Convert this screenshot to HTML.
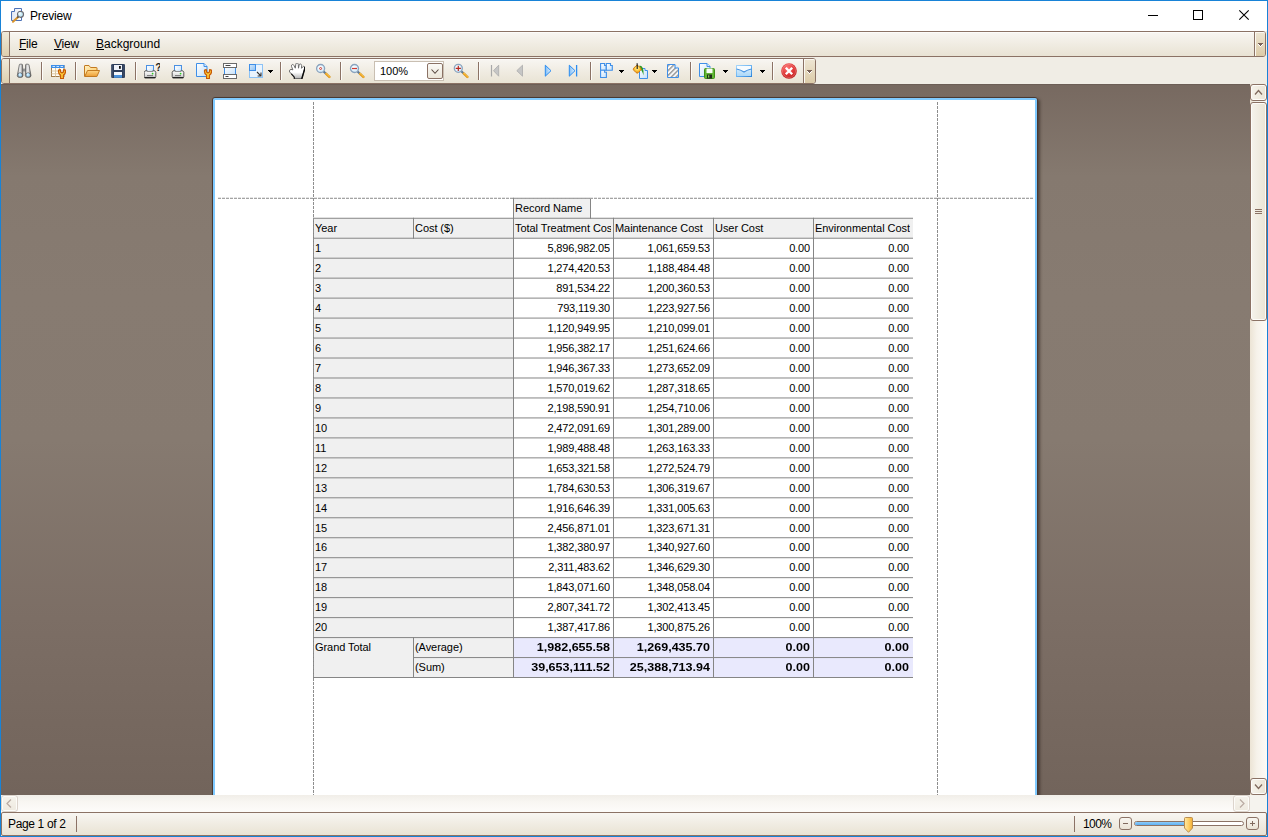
<!DOCTYPE html>
<html lang="en">
<head>
<meta charset="utf-8">
<title>Preview</title>
<style>
*{box-sizing:border-box;margin:0;padding:0}
html,body{width:1268px;height:837px;overflow:hidden}
body{position:relative;background:#f0ede5;font-family:"Liberation Sans",sans-serif;font-size:12px;color:#000}
.abs{position:absolute}
#winborder{position:absolute;left:0;top:0;width:1268px;height:837px;border:1px solid #1883d7;pointer-events:none;z-index:50}
#title{position:absolute;left:1px;top:1px;width:1266px;height:30px;background:#fff}
#title .txt{position:absolute;left:29px;top:7px;font-size:12px;line-height:16px;letter-spacing:-0.15px}
.bar{position:absolute;border:1px solid #8b7265;border-radius:3px;box-shadow:inset 0 1px 0 #fdfcfa;background:linear-gradient(#f8f6f2 0%,#f1ede4 45%,#e9e3d4 100%)}
.grip{position:absolute;left:0;top:0;width:8px;bottom:0;border-right:1px solid #8b7265;background:linear-gradient(#efe9da,#dfcfae);border-radius:2px 0 0 2px}
.menu{position:absolute;top:0;height:24px;line-height:24px;font-size:12px;letter-spacing:-0.25px}
.menu u{text-decoration:underline;text-underline-offset:1px}
.sep{position:absolute;top:3px;width:2px;height:18px;background:linear-gradient(90deg,#8b7265 50%,#fdfcfa 50%)}
.ic{position:absolute;top:4px;width:16px;height:16px}
.dd{position:absolute;top:11px;width:5px;height:1px;color:#000;background:currentColor}.dd::before{content:'';position:absolute;left:1px;top:1px;width:3px;height:1px;background:currentColor}.dd::after{content:'';position:absolute;left:2px;top:2px;width:1px;height:1px;background:currentColor}
#view{position:absolute;left:1px;top:84px;width:1249px;height:711px;background:linear-gradient(#776960 0%,#85796f 13%,#877b71 30%,#867a70 50%,#7c6e65 75%,#72645b 100%);overflow:hidden}
#pageshadow{position:absolute;left:211px;top:13px;width:826px;height:720px;border:1px solid #4a3932;border-radius:3px;box-shadow:2px 2px 3px rgba(40,30,25,.55)}
#page{position:absolute;left:212px;top:14px;width:824px;height:720px;border:2px solid #80caff;border-radius:2px;background:#fff}
.c{position:absolute;border:1px solid transparent;font-size:11px;line-height:13px;white-space:nowrap;overflow:hidden;padding:3px 2px 0 1px;background:#fff;color:#000}
.c span{display:block;overflow:hidden}
.c.h{background:#f0f0f0}
.c.n{text-align:right;padding-right:3px;letter-spacing:-.14px}
.c.h{letter-spacing:-.06px}
.c.t{background:#e9e9fd;font-weight:bold}
.c.t{letter-spacing:0}
.c.t span{overflow:visible;transform:scaleX(1.14);transform-origin:100% 50%}
.sbtn{position:absolute;border:1px solid #8b7265;border-radius:3px;background:linear-gradient(90deg,#f6f3ec,#eae4d5);box-shadow:inset 0 0 0 1px #fdfcf9}
#hscroll .sbtn{background:linear-gradient(#f6f3ec,#eeeae0)}
.sbtn.dis{border-color:#dcd4cc}
.zbtn{position:absolute;width:13px;height:13px;border:1px solid #8b7265;border-radius:3px;background:linear-gradient(#f8f6f1,#e9e3d5)}
.cust{position:absolute;right:0;top:0;bottom:0;border-left:1px solid #8b7265;background:linear-gradient(#eee6d4,#dccba8);border-radius:0 2px 2px 0;box-shadow:inset 1px 1px 0 #fbf8f1}
.cust .dd{filter:drop-shadow(0 1px 0 #fff)}
</style>
</head>
<body>
<svg width="0" height="0" style="position:absolute"><defs>
<linearGradient id="gBar" x1="0" x2="1" y1="0" y2="0"><stop offset="0" stop-color="#8a8a8a"/><stop offset=".3" stop-color="#dedede"/><stop offset=".5" stop-color="#f0f0f0"/><stop offset=".8" stop-color="#a6a6a6"/><stop offset="1" stop-color="#5a5a5a"/></linearGradient>
<linearGradient id="gFoB" x1="0" x2="1" y1="0" y2="1"><stop offset="0" stop-color="#fff0c0"/><stop offset="1" stop-color="#ffc860"/></linearGradient>
<linearGradient id="gFoF" x1="0" x2="0" y1="0" y2="1"><stop offset="0" stop-color="#ffd684"/><stop offset="1" stop-color="#ec9c34"/></linearGradient>
<linearGradient id="gPap" x1="0" x2="1" y1="0" y2="1"><stop offset="0" stop-color="#ffffff"/><stop offset="1" stop-color="#c4e0fa"/></linearGradient>
<linearGradient id="gPrn" x1="0" x2="0" y1="0" y2="1"><stop offset="0" stop-color="#ffffff"/><stop offset=".6" stop-color="#e2e2e2"/><stop offset="1" stop-color="#bdbdbd"/></linearGradient>
<linearGradient id="gBlu" x1="0" x2="1" y1="0" y2="1"><stop offset="0" stop-color="#d6eafc"/><stop offset="1" stop-color="#8cc0f2"/></linearGradient>
<radialGradient id="gLens" cx=".4" cy=".35" r=".7"><stop offset="0" stop-color="#ffffff"/><stop offset="1" stop-color="#cbe8fb"/></radialGradient>
<linearGradient id="gNav" x1="0" x2="1" y1="0" y2="0"><stop offset="0" stop-color="#7dbcf7"/><stop offset="1" stop-color="#e8f4fe"/></linearGradient>
<linearGradient id="gHand" x1="0" x2="0" y1="0" y2="1"><stop offset="0" stop-color="#ffffff"/><stop offset=".6" stop-color="#ffffff"/><stop offset="1" stop-color="#b4b4b4"/></linearGradient>
<radialGradient id="gBuck" cx=".4" cy=".4" r=".65"><stop offset="0" stop-color="#fff3a8"/><stop offset=".5" stop-color="#ffd24a"/><stop offset="1" stop-color="#ee9a1c"/></radialGradient>
<pattern id="hatch" width="3.400" height="3.400" patternUnits="userSpaceOnUse" patternTransform="rotate(-45)"><rect width="3.400" height="3.400" fill="#fbfbfb"/><rect width="3.400" height="1.500" fill="#9c9c9c"/></pattern>
<linearGradient id="gMail" x1="0" x2="0" y1="0" y2="1"><stop offset="0" stop-color="#e4f3fe"/><stop offset="1" stop-color="#a8d6f8"/></linearGradient>
<radialGradient id="gRed" cx=".4" cy=".3" r=".8"><stop offset="0" stop-color="#f77"/><stop offset=".5" stop-color="#e13a3a"/><stop offset="1" stop-color="#b81818"/></radialGradient>
<linearGradient id="gThumb" x1="0" x2="1" y1="0" y2="0"><stop offset="0" stop-color="#ffe9a6"/><stop offset=".5" stop-color="#fdd06a"/><stop offset="1" stop-color="#f3ad33"/></linearGradient>
<linearGradient id="gTi" x1="0" x2="1" y1="0" y2="0"><stop offset="0" stop-color="#dfe5f2"/><stop offset="1" stop-color="#ffffff"/></linearGradient>
<linearGradient id="gMailS" x1="0" x2="1" y1="0" y2="1"><stop offset="0" stop-color="#a8d6fa"/><stop offset=".5" stop-color="#6cb4f2"/><stop offset="1" stop-color="#2f86dc"/></linearGradient>
</defs></svg>
<div id="title">
<svg class="abs" style="left:8px;top:6px" width="18" height="18" viewBox="0 0 18 18"><path d="M5.500 1.500H12.500V13.500H2.500V4.500H5.500Z" fill="url(#gTi)" stroke="#4d72b8" stroke-width="1"/><path d="M8.800 10.200L4 14.700" stroke="#d9962f" stroke-width="2.100" stroke-linecap="round"/><path d="M9.300 9.700L8.300 10.700" stroke="#5b4a34" stroke-width="1.800"/><circle cx="11.500" cy="7.300" r="3" fill="#c9edf9" stroke="#6b6b73" stroke-width="1.200"/><circle cx="10.800" cy="6.600" r="1.300" fill="#effaff"/></svg>
<div class="txt">Preview</div>
<svg class="abs" style="left:1140px;top:0" width="126" height="30" viewBox="0 0 126 30"><path d="M7 14.500h10" stroke="#000" stroke-width="1" fill="none"/><rect x="52.500" y="9.500" width="9" height="9" stroke="#000" stroke-width="1" fill="none"/><path d="M98.300 9.300l9.400 9.400M107.700 9.300l-9.400 9.400" stroke="#000" stroke-width="1.100" fill="none"/></svg>
</div>
<div class="bar" id="menubar" style="left:1px;top:31px;width:1265px;height:26px">
<div class="grip"></div>
<div class="menu" style="left:17px"><u>F</u>ile</div>
<div class="menu" style="left:52px"><u>V</u>iew</div>
<div class="menu" style="left:94px;letter-spacing:0"><u>B</u>ackground</div>
<div class="cust" style="width:11px"><div class="dd" style="left:3px;top:11px;color:#7a6256"></div></div>
</div>
<div class="bar" id="toolbar" style="left:1px;top:58px;width:815px;height:26px">
<div class="grip"></div>
<div class="sep" style="left:39px"></div><div class="sep" style="left:73px"></div><div class="sep" style="left:133px"></div><div class="sep" style="left:278px"></div><div class="sep" style="left:338px"></div><div class="sep" style="left:476px"></div><div class="sep" style="left:588px"></div><div class="sep" style="left:688px"></div><div class="sep" style="left:770px"></div>
<svg class="ic" style="left:14px" viewBox="0 0 16 16"><rect x="6.500" y="5.600" width="3.200" height="2.900" fill="#9a9a9a"/><path d="M3.300 1.900q0-.7.800-.7h1.600q.8 0 .8.700l.5 10.700q0 2-2.900 2t-2.800-2z" fill="url(#gBar)" stroke="#555" stroke-width=".7"/><path d="M9.600 1.900q0-.7.800-.7h1.600q.8 0 1 .7l2 10.700q0 2-2.800 2t-2.900-2z" fill="url(#gBar)" stroke="#555" stroke-width=".7"/><circle cx="4.100" cy="11.900" r="2.300" fill="#4a4a4a"/><circle cx="12.100" cy="11.900" r="2.300" fill="#4a4a4a"/><circle cx="4.100" cy="11.900" r="1.900" fill="#aadcfb"/><circle cx="12.100" cy="11.900" r="1.900" fill="#aadcfb"/><circle cx="3.700" cy="11.500" r=".9" fill="#dcf1ff"/><circle cx="11.700" cy="11.500" r=".9" fill="#dcf1ff"/></svg>
<svg class="ic" style="left:48px" viewBox="0 0 16 16"><rect x="1.500" y="2.500" width="12.500" height="11" fill="#fffdf8" stroke="#a07c4c"/><path d="M1.500 8h12M1.500 10.800h12M5.500 5v8.500M9.500 5v8.500" stroke="#dcc7a0" stroke-width="1" fill="none"/><rect x="1" y="2" width="13.500" height="3" fill="#3f8fe8"/><path d="M2.500 3.500h2.500M6.500 3.500h2.500M10.500 3.500h2.500" stroke="#cfe6ff" stroke-width="1"/><path d="M8.600 7.200l1.700-.6.400 2.500q1.300 1.300 2.600 0l.4-2.500 1.700.6q.5 3.800-2 4.900v3.400h-2.800v-3.400q-2.500-1.100-2-4.900z" fill="#ffd23c" stroke="#c85a05" stroke-width="1.250" stroke-linejoin="round"/></svg>
<svg class="ic" style="left:82px" viewBox="0 0 16 16"><path d="M.5 13.500v-10.500q0-.5.500-.5h4l1.500 2h6q.5 0 .5.500v3" fill="url(#gFoB)" stroke="#c27a22" stroke-linejoin="round"/><path d="M.8 13.500l2.700-6h12l-2.600 6z" fill="url(#gFoF)" stroke="#c27a22" stroke-linejoin="round"/></svg>
<svg class="ic" style="left:108px" viewBox="0 0 16 16"><rect x="1.200" y="1" width="13.800" height="14" rx="1.300" fill="#2d3d59"/><path d="M2.300 1.500v13M13.900 1.500v13" stroke="#596983" stroke-width=".5"/><rect x="4" y="2" width="8" height="5" fill="#eef2fa"/><rect x="9" y="3" width="1.800" height="2.800" fill="#111"/><rect x="4" y="9" width="8" height="3.200" fill="#f4f7fc"/><rect x="4" y="12" width="8" height="2.800" fill="#4c93dc"/></svg>
<svg class="ic" style="left:142px" viewBox="0 0 16 16"><g transform="translate(0 0)"><rect x="2.500" y="2.500" width="7" height="6.500" fill="url(#gPap)" stroke="#4a90e2"/><path d="M1.200 7.800h9.600l1 1.500v4.200q0 1.300-1.300 1.300h-9q-1.300 0-1.300-1.300v-4.200z" fill="url(#gPrn)" stroke="#555" stroke-width="1"/><path d="M3 8.400h6" stroke="#8a8a8a" stroke-width="1"/><rect x="3.500" y="5" width="5" height="3" fill="url(#gPap)"/><path d="M3 12.600h6" stroke="#777" stroke-width="1"/><path d="M1 14.700h10" stroke="#222" stroke-width="1.200" stroke-linecap="round"/><circle cx="8.600" cy="10.600" r=".9" fill="#2fd020"/></g><text x="11.300" y="7.500" font-family="Liberation Sans,sans-serif" font-weight="bold" font-size="10.500" fill="#1a1a1a">?</text></svg>
<svg class="ic" style="left:168px" viewBox="0 0 16 16"><g transform="translate(2 0)"><rect x="2.500" y="2.500" width="7" height="6.500" fill="url(#gPap)" stroke="#4a90e2"/><path d="M1.200 7.800h9.600l1 1.500v4.200q0 1.300-1.300 1.300h-9q-1.300 0-1.300-1.300v-4.200z" fill="url(#gPrn)" stroke="#555" stroke-width="1"/><path d="M3 8.400h6" stroke="#8a8a8a" stroke-width="1"/><rect x="3.500" y="5" width="5" height="3" fill="url(#gPap)"/><path d="M3 12.600h6" stroke="#777" stroke-width="1"/><path d="M1 14.700h10" stroke="#222" stroke-width="1.200" stroke-linecap="round"/><circle cx="8.600" cy="10.600" r=".9" fill="#2fd020"/></g></svg>
<svg class="ic" style="left:194px" viewBox="0 0 16 16"><path d="M.5.500h7.500l3 3v10h-10.500z" fill="url(#gPap)" stroke="#3f8fe8" stroke-linejoin="round"/><path d="M8 .5v3h3" fill="#dcecfc" stroke="#3f8fe8" stroke-linejoin="round"/><path d="M8.600 7.200l1.700-.6.400 2.500q1.300 1.300 2.600 0l.4-2.500 1.700.6q.5 3.800-2 4.900v3.400h-2.800v-3.400q-2.500-1.100-2-4.900z" fill="#ffd23c" stroke="#c85a05" stroke-width="1.250" stroke-linejoin="round"/></svg>
<svg class="ic" style="left:220px" viewBox="0 0 16 16"><rect x="2.500" y="4" width="11" height="8" fill="url(#gPap)" stroke="#3f8fe8"/><rect x="1.500" y=".5" width="13" height="4" fill="#fff" stroke="#6a6a6a"/><rect x="1.500" y="11.500" width="13" height="4" fill="#fff" stroke="#6a6a6a"/><path d="M3.500 2.500h5M3.500 13.500h3" stroke="#444" stroke-width="1"/></svg>
<svg class="ic" style="left:246px" viewBox="0 0 16 16"><rect x="1.500" y="1.500" width="13" height="13" fill="#eaf4fe" stroke="#8cc2f5"/><rect x="1.500" y="1.500" width="6" height="6" fill="url(#gBlu)" stroke="#3f8fe8"/><path d="M9 9l3.800 3.800M13 9.600v3.400h-3.400" stroke="#333" stroke-width="1.100" fill="none"/></svg>
<svg class="ic" style="left:287px" viewBox="0 0 16 16"><path d="M5.300 15.500v-1.300l-2.700-3-1.900-2.200q-.8-1.200.2-2.100 1.100-.8 2.300-.3l.7.400-1.400-3.600q-.3-1.600.8-1.900 1.200-.2 1.700 1.100l1.300 2.600.5-4q.2-1.300 1.300-1.300 1.100.1 1.200 1.400l.2 3.900.6-3.200q.3-1.100 1.300-1 1.200.2 1.200 1.500l-.1 2.800 1.300-1.500q.8-.8 1.600-.3.800.7.400 1.900l-1.200 4.100-1.700 6z" fill="url(#gHand)" stroke="#6e6e6e" stroke-width="1" stroke-linejoin="round"/><path d="M15.700 4.600q.3.500.1.900l-1.200 4.100-1.700 5.900" fill="none" stroke="#0a0a0a" stroke-width="1.500" stroke-linecap="round"/><path d="M5.300 15.500v-1.300l-2.700-3" fill="none" stroke="#1a1a1a" stroke-width="1.200" stroke-linecap="round"/></svg>
<svg class="ic" style="left:313px" viewBox="0 0 16 16"><path d="M8.6 8.5L14.200 13.700" stroke="#5f7a96" stroke-width="2.200" stroke-linecap="round"/><path d="M11.2 10.8L14.400 13.900" stroke="#f0a826" stroke-width="2.400" stroke-linecap="round"/><path d="M11.7 10.6L14.900 13.300" stroke="#ffe38a" stroke-width=".7" stroke-dasharray="1 .8"/><circle cx="5.6" cy="5.5" r="4" fill="url(#gLens)" stroke="#8ba3bd" stroke-width="1.300"/><circle cx="5.6" cy="5.5" r="1" fill="#fff" stroke="#d03a30" stroke-width="1"/></svg>
<svg class="ic" style="left:347px" viewBox="0 0 16 16"><path d="M8.5 8.5L14.200 13.700" stroke="#5f7a96" stroke-width="2.200" stroke-linecap="round"/><path d="M11.1 10.8L14.400 13.900" stroke="#f0a826" stroke-width="2.400" stroke-linecap="round"/><path d="M11.6 10.6L14.900 13.300" stroke="#ffe38a" stroke-width=".7" stroke-dasharray="1 .8"/><circle cx="5.5" cy="5.5" r="4" fill="url(#gLens)" stroke="#8ba3bd" stroke-width="1.300"/><path d="M3.0 5.5h5" stroke="#d03a30" stroke-width="1.200"/></svg>
<svg class="ic" style="left:451px" viewBox="0 0 16 16"><path d="M8.3 8.3L14.200 13.700" stroke="#5f7a96" stroke-width="2.200" stroke-linecap="round"/><path d="M10.9 10.6L14.400 13.900" stroke="#f0a826" stroke-width="2.400" stroke-linecap="round"/><path d="M11.4 10.4L14.900 13.300" stroke="#ffe38a" stroke-width=".7" stroke-dasharray="1 .8"/><circle cx="5.3" cy="5.3" r="4" fill="url(#gLens)" stroke="#8ba3bd" stroke-width="1.300"/><path d="M2.6999999999999997 5.3h5.200M5.3 2.6999999999999997v5.200" stroke="#b82820" stroke-width="1.200"/></svg>
<svg class="ic" style="left:485px" viewBox="0 0 16 16"><path d="M4.500 2v11.500" stroke="#a8a8a8" stroke-width="1.200"/><path d="M6.500 7.700l5.200-5.500v11z" fill="#c6c6c6" stroke="#ababab" stroke-width=".8"/></svg>
<svg class="ic" style="left:511px" viewBox="0 0 16 16"><path d="M3.800 7.700l5.700-5.500v11z" fill="#c6c6c6" stroke="#ababab" stroke-width=".8"/></svg>
<svg class="ic" style="left:537px" viewBox="0 0 16 16"><path d="M12 7.700l-5.700-5.500v11z" fill="url(#gNav)" stroke="#2b8cf0" stroke-width="1"/></svg>
<svg class="ic" style="left:563px" viewBox="0 0 16 16"><path d="M10 7.700l-5.700-5.500v11z" fill="url(#gNav)" stroke="#2b8cf0" stroke-width="1"/><path d="M11.600 2v11.500" stroke="#2b8cf0" stroke-width="1.300"/></svg>
<svg class="ic" style="left:597px" viewBox="0 0 16 16"><path d="M1.600 .5h4v2h1.700v4.800h-5.700z" fill="url(#gPap)" stroke="#3f8fe8" stroke-width="1.100"/><path d="M7.300 .5h4.200v2h1.800v4.800h-6z" fill="url(#gPap)" stroke="#3f8fe8" stroke-width="1.100"/><path d="M1.600 7.300h4v2h1.800v5.200h-5.800z" fill="url(#gPap)" stroke="#3f8fe8" stroke-width="1.100"/></svg>
<svg class="ic" style="left:630px" viewBox="0 0 16 16"><path d="M7.500 5.500h5.500v2h2.500v8h-8z" fill="url(#gPap)" stroke="#3f8fe8"/><path d="M7.600 2.600q4.700.6 3.900 10q-1.300-5.600-4.400-7.600z" fill="#2a9a28"/><rect x="-3.200" y="-3.200" width="6.400" height="6.400" rx="1.600" transform="translate(5.200 6.200) rotate(45)" fill="url(#gBuck)" stroke="#d27c0c" stroke-width=".9"/><path d="M5.200.4v5.500" stroke="#111" stroke-width="1.100"/><circle cx="5.200" cy=".7" r=".7" fill="#777"/></svg>
<svg class="ic" style="left:663px" viewBox="0 0 16 16"><path d="M10.200 1.700l3.100 3.100h-3.100z" fill="#f4f9ff" stroke="#a4cdf5" stroke-width=".6"/><path d="M2.500 1.500h7.500v3.500h3.500v9.500h-11z" fill="url(#hatch)" stroke="#3f8fe8"/></svg>
<svg class="ic" style="left:697px" viewBox="0 0 16 16"><path d="M.5.500h7.500l3 3v10h-10.500z" fill="url(#gPap)" stroke="#3f8fe8" stroke-linejoin="round"/><path d="M8 .5v3h3" fill="#dcecfc" stroke="#3f8fe8" stroke-linejoin="round"/><rect x="5.500" y="5.500" width="10" height="10" rx="1" fill="#62b635" stroke="#3f9018"/><rect x="7.500" y="5.500" width="6" height="4.500" fill="#fafdf7"/><rect x="8" y="11.500" width="5" height="4" fill="#1f2a1a"/><rect x="9" y="12.300" width="1.300" height="2.300" fill="#7fd050"/></svg>
<svg class="ic" style="left:734px" viewBox="0 0 16 16"><rect x=".5" y="2.500" width="15" height="11" fill="url(#gMail)" stroke="url(#gMailS)"/><path d="M1 3h14v3q-3.500.8-7 3-3.500-2.200-7-3z" fill="#f6fbff"/><path d="M.6 6q3.900.8 7.400 3 3.500-2.200 7.400-3" fill="none" stroke="#3f8fe0" stroke-width="1.100"/></svg>
<svg class="ic" style="left:779px" viewBox="0 0 16 16"><circle cx="8" cy="8" r="7.800" fill="url(#gRed)"/><circle cx="8" cy="8" r="6.500" fill="none" stroke="#fff" stroke-opacity=".22" stroke-width="1"/><path d="M4.800 4.800l6.400 6.400M11.200 4.800l-6.400 6.400" stroke="#fff" stroke-width="2.300" stroke-linecap="butt"/></svg>
<div class="dd" style="left:266.0px"></div><div class="dd" style="left:617.0px"></div><div class="dd" style="left:650.0px"></div><div class="dd" style="left:721.0px"></div><div class="dd" style="left:758.0px"></div>
<div class="abs" id="combo" style="left:372px;top:2px;width:70px;height:20px;border:1px solid #c9bfb2;background:#fff"><div class="abs" style="left:5px;top:2px;font-size:11px;line-height:14px">100%</div><div class="abs" style="left:52px;top:1px;width:16px;height:16px;border:1px solid #8b7265;border-radius:2px;background:linear-gradient(#fbfaf7,#ebe5d8)"><svg width="14" height="14" viewBox="0 0 14 14" style="display:block"><path d="M3.500 5.500l3.500 3.800l3.500-3.800" fill="none" stroke="#5a4a42" stroke-width="1.100"/></svg></div></div>
<div class="cust" style="width:12px"><div class="dd" style="left:3px;top:11px;color:#7a6256"></div></div>
</div>
<div id="view">
<div class="abs" style="left:0;top:0;width:100%;height:1px;background:#6c5e56"></div>
<div id="pageshadow"></div>
<div id="page"></div>
</div>
<div class="abs" id="content" style="left:0;top:0;width:1250px;height:795px;overflow:hidden">
<div class="c h" style="left:513px;top:198px;width:78px;height:21px"><span>Record Name</span></div>
<div class="c h" style="left:313px;top:218px;width:101px;height:21px"><span>Year</span></div>
<div class="c h" style="left:413px;top:218px;width:101px;height:21px"><span>Cost ($)</span></div>
<div class="c h" style="left:513px;top:218px;width:101px;height:21px"><span>Total Treatment Cost</span></div>
<div class="c h" style="left:613px;top:218px;width:101px;height:21px"><span>Maintenance Cost</span></div>
<div class="c h" style="left:713px;top:218px;width:101px;height:21px"><span>User Cost</span></div>
<div class="c h" style="left:813px;top:218px;width:100px;height:21px"><span>Environmental Cost</span></div>
<div class="c h" style="left:313px;top:238px;width:201px;height:21px"><span>1</span></div>
<div class="c n" style="left:513px;top:238px;width:101px;height:21px"><span>5,896,982.05</span></div>
<div class="c n" style="left:613px;top:238px;width:101px;height:21px"><span>1,061,659.53</span></div>
<div class="c n" style="left:713px;top:238px;width:101px;height:21px"><span>0.00</span></div>
<div class="c n" style="left:813px;top:238px;width:100px;height:21px"><span>0.00</span></div>
<div class="c h" style="left:313px;top:258px;width:201px;height:21px"><span>2</span></div>
<div class="c n" style="left:513px;top:258px;width:101px;height:21px"><span>1,274,420.53</span></div>
<div class="c n" style="left:613px;top:258px;width:101px;height:21px"><span>1,188,484.48</span></div>
<div class="c n" style="left:713px;top:258px;width:101px;height:21px"><span>0.00</span></div>
<div class="c n" style="left:813px;top:258px;width:100px;height:21px"><span>0.00</span></div>
<div class="c h" style="left:313px;top:278px;width:201px;height:21px"><span>3</span></div>
<div class="c n" style="left:513px;top:278px;width:101px;height:21px"><span>891,534.22</span></div>
<div class="c n" style="left:613px;top:278px;width:101px;height:21px"><span>1,200,360.53</span></div>
<div class="c n" style="left:713px;top:278px;width:101px;height:21px"><span>0.00</span></div>
<div class="c n" style="left:813px;top:278px;width:100px;height:21px"><span>0.00</span></div>
<div class="c h" style="left:313px;top:298px;width:201px;height:21px"><span>4</span></div>
<div class="c n" style="left:513px;top:298px;width:101px;height:21px"><span>793,119.30</span></div>
<div class="c n" style="left:613px;top:298px;width:101px;height:21px"><span>1,223,927.56</span></div>
<div class="c n" style="left:713px;top:298px;width:101px;height:21px"><span>0.00</span></div>
<div class="c n" style="left:813px;top:298px;width:100px;height:21px"><span>0.00</span></div>
<div class="c h" style="left:313px;top:318px;width:201px;height:21px"><span>5</span></div>
<div class="c n" style="left:513px;top:318px;width:101px;height:21px"><span>1,120,949.95</span></div>
<div class="c n" style="left:613px;top:318px;width:101px;height:21px"><span>1,210,099.01</span></div>
<div class="c n" style="left:713px;top:318px;width:101px;height:21px"><span>0.00</span></div>
<div class="c n" style="left:813px;top:318px;width:100px;height:21px"><span>0.00</span></div>
<div class="c h" style="left:313px;top:338px;width:201px;height:21px"><span>6</span></div>
<div class="c n" style="left:513px;top:338px;width:101px;height:21px"><span>1,956,382.17</span></div>
<div class="c n" style="left:613px;top:338px;width:101px;height:21px"><span>1,251,624.66</span></div>
<div class="c n" style="left:713px;top:338px;width:101px;height:21px"><span>0.00</span></div>
<div class="c n" style="left:813px;top:338px;width:100px;height:21px"><span>0.00</span></div>
<div class="c h" style="left:313px;top:358px;width:201px;height:21px"><span>7</span></div>
<div class="c n" style="left:513px;top:358px;width:101px;height:21px"><span>1,946,367.33</span></div>
<div class="c n" style="left:613px;top:358px;width:101px;height:21px"><span>1,273,652.09</span></div>
<div class="c n" style="left:713px;top:358px;width:101px;height:21px"><span>0.00</span></div>
<div class="c n" style="left:813px;top:358px;width:100px;height:21px"><span>0.00</span></div>
<div class="c h" style="left:313px;top:378px;width:201px;height:21px"><span>8</span></div>
<div class="c n" style="left:513px;top:378px;width:101px;height:21px"><span>1,570,019.62</span></div>
<div class="c n" style="left:613px;top:378px;width:101px;height:21px"><span>1,287,318.65</span></div>
<div class="c n" style="left:713px;top:378px;width:101px;height:21px"><span>0.00</span></div>
<div class="c n" style="left:813px;top:378px;width:100px;height:21px"><span>0.00</span></div>
<div class="c h" style="left:313px;top:398px;width:201px;height:21px"><span>9</span></div>
<div class="c n" style="left:513px;top:398px;width:101px;height:21px"><span>2,198,590.91</span></div>
<div class="c n" style="left:613px;top:398px;width:101px;height:21px"><span>1,254,710.06</span></div>
<div class="c n" style="left:713px;top:398px;width:101px;height:21px"><span>0.00</span></div>
<div class="c n" style="left:813px;top:398px;width:100px;height:21px"><span>0.00</span></div>
<div class="c h" style="left:313px;top:418px;width:201px;height:21px"><span>10</span></div>
<div class="c n" style="left:513px;top:418px;width:101px;height:21px"><span>2,472,091.69</span></div>
<div class="c n" style="left:613px;top:418px;width:101px;height:21px"><span>1,301,289.00</span></div>
<div class="c n" style="left:713px;top:418px;width:101px;height:21px"><span>0.00</span></div>
<div class="c n" style="left:813px;top:418px;width:100px;height:21px"><span>0.00</span></div>
<div class="c h" style="left:313px;top:438px;width:201px;height:21px"><span>11</span></div>
<div class="c n" style="left:513px;top:438px;width:101px;height:21px"><span>1,989,488.48</span></div>
<div class="c n" style="left:613px;top:438px;width:101px;height:21px"><span>1,263,163.33</span></div>
<div class="c n" style="left:713px;top:438px;width:101px;height:21px"><span>0.00</span></div>
<div class="c n" style="left:813px;top:438px;width:100px;height:21px"><span>0.00</span></div>
<div class="c h" style="left:313px;top:458px;width:201px;height:21px"><span>12</span></div>
<div class="c n" style="left:513px;top:458px;width:101px;height:21px"><span>1,653,321.58</span></div>
<div class="c n" style="left:613px;top:458px;width:101px;height:21px"><span>1,272,524.79</span></div>
<div class="c n" style="left:713px;top:458px;width:101px;height:21px"><span>0.00</span></div>
<div class="c n" style="left:813px;top:458px;width:100px;height:21px"><span>0.00</span></div>
<div class="c h" style="left:313px;top:478px;width:201px;height:21px"><span>13</span></div>
<div class="c n" style="left:513px;top:478px;width:101px;height:21px"><span>1,784,630.53</span></div>
<div class="c n" style="left:613px;top:478px;width:101px;height:21px"><span>1,306,319.67</span></div>
<div class="c n" style="left:713px;top:478px;width:101px;height:21px"><span>0.00</span></div>
<div class="c n" style="left:813px;top:478px;width:100px;height:21px"><span>0.00</span></div>
<div class="c h" style="left:313px;top:498px;width:201px;height:21px"><span>14</span></div>
<div class="c n" style="left:513px;top:498px;width:101px;height:21px"><span>1,916,646.39</span></div>
<div class="c n" style="left:613px;top:498px;width:101px;height:21px"><span>1,331,005.63</span></div>
<div class="c n" style="left:713px;top:498px;width:101px;height:21px"><span>0.00</span></div>
<div class="c n" style="left:813px;top:498px;width:100px;height:21px"><span>0.00</span></div>
<div class="c h" style="left:313px;top:518px;width:201px;height:20px"><span>15</span></div>
<div class="c n" style="left:513px;top:518px;width:101px;height:20px"><span>2,456,871.01</span></div>
<div class="c n" style="left:613px;top:518px;width:101px;height:20px"><span>1,323,671.31</span></div>
<div class="c n" style="left:713px;top:518px;width:101px;height:20px"><span>0.00</span></div>
<div class="c n" style="left:813px;top:518px;width:100px;height:20px"><span>0.00</span></div>
<div class="c h" style="left:313px;top:537px;width:201px;height:21px"><span>16</span></div>
<div class="c n" style="left:513px;top:537px;width:101px;height:21px"><span>1,382,380.97</span></div>
<div class="c n" style="left:613px;top:537px;width:101px;height:21px"><span>1,340,927.60</span></div>
<div class="c n" style="left:713px;top:537px;width:101px;height:21px"><span>0.00</span></div>
<div class="c n" style="left:813px;top:537px;width:100px;height:21px"><span>0.00</span></div>
<div class="c h" style="left:313px;top:557px;width:201px;height:21px"><span>17</span></div>
<div class="c n" style="left:513px;top:557px;width:101px;height:21px"><span>2,311,483.62</span></div>
<div class="c n" style="left:613px;top:557px;width:101px;height:21px"><span>1,346,629.30</span></div>
<div class="c n" style="left:713px;top:557px;width:101px;height:21px"><span>0.00</span></div>
<div class="c n" style="left:813px;top:557px;width:100px;height:21px"><span>0.00</span></div>
<div class="c h" style="left:313px;top:577px;width:201px;height:21px"><span>18</span></div>
<div class="c n" style="left:513px;top:577px;width:101px;height:21px"><span>1,843,071.60</span></div>
<div class="c n" style="left:613px;top:577px;width:101px;height:21px"><span>1,348,058.04</span></div>
<div class="c n" style="left:713px;top:577px;width:101px;height:21px"><span>0.00</span></div>
<div class="c n" style="left:813px;top:577px;width:100px;height:21px"><span>0.00</span></div>
<div class="c h" style="left:313px;top:597px;width:201px;height:21px"><span>19</span></div>
<div class="c n" style="left:513px;top:597px;width:101px;height:21px"><span>2,807,341.72</span></div>
<div class="c n" style="left:613px;top:597px;width:101px;height:21px"><span>1,302,413.45</span></div>
<div class="c n" style="left:713px;top:597px;width:101px;height:21px"><span>0.00</span></div>
<div class="c n" style="left:813px;top:597px;width:100px;height:21px"><span>0.00</span></div>
<div class="c h" style="left:313px;top:617px;width:201px;height:21px"><span>20</span></div>
<div class="c n" style="left:513px;top:617px;width:101px;height:21px"><span>1,387,417.86</span></div>
<div class="c n" style="left:613px;top:617px;width:101px;height:21px"><span>1,300,875.26</span></div>
<div class="c n" style="left:713px;top:617px;width:101px;height:21px"><span>0.00</span></div>
<div class="c n" style="left:813px;top:617px;width:100px;height:21px"><span>0.00</span></div>
<div class="c h" style="left:313px;top:637px;width:101px;height:41px"><span>Grand Total</span></div>
<div class="c h" style="left:413px;top:637px;width:101px;height:21px"><span>(Average)</span></div>
<div class="c h" style="left:413px;top:657px;width:101px;height:21px"><span>(Sum)</span></div>
<div class="c n t" style="left:513px;top:637px;width:101px;height:21px"><span>1,982,655.58</span></div>
<div class="c n t" style="left:613px;top:637px;width:101px;height:21px"><span>1,269,435.70</span></div>
<div class="c n t" style="left:713px;top:637px;width:101px;height:21px"><span>0.00</span></div>
<div class="c n t" style="left:813px;top:637px;width:100px;height:21px"><span>0.00</span></div>
<div class="c n t" style="left:513px;top:657px;width:101px;height:21px"><span>39,653,111.52</span></div>
<div class="c n t" style="left:613px;top:657px;width:101px;height:21px"><span>25,388,713.94</span></div>
<div class="c n t" style="left:713px;top:657px;width:101px;height:21px"><span>0.00</span></div>
<div class="c n t" style="left:813px;top:657px;width:100px;height:21px"><span>0.00</span></div>
<svg class="abs" style="left:0;top:0" width="1250" height="795" viewBox="0 0 1250 795"><g stroke="#858585" stroke-width="1" fill="none"><path d="M513 198.28H591"/><path d="M313 218.25H913"/><path d="M313 238.22H913"/><path d="M313 258.19H913"/><path d="M313 278.15H913"/><path d="M313 298.12H913"/><path d="M313 318.09H913"/><path d="M313 338.06H913"/><path d="M313 358.03H913"/><path d="M313 377.99H913"/><path d="M313 397.96H913"/><path d="M313 417.93H913"/><path d="M313 437.90H913"/><path d="M313 457.87H913"/><path d="M313 477.83H913"/><path d="M313 497.80H913"/><path d="M313 517.77H913"/><path d="M313 537.74H913"/><path d="M313 557.71H913"/><path d="M313 577.67H913"/><path d="M313 597.64H913"/><path d="M313 617.61H913"/><path d="M313 637.58H913"/><path d="M413 657.55H913"/><path d="M313 677.51H913"/><path d="M313.5 217.75V678.01"/><path d="M413.5 217.75V238.72"/><path d="M413.5 637.08V678.01"/><path d="M513.5 197.78V678.01"/><path d="M590.5 197.78V218.75"/><path d="M613.5 217.75V678.01"/><path d="M713.5 217.75V678.01"/><path d="M813.5 217.75V678.01"/></g></svg>
<div class="abs" style="left:313px;top:102px;width:1px;height:693px;background:repeating-linear-gradient(#8e8e8e 0 3px,transparent 3px 4px)"></div>
<div class="abs" style="left:937px;top:102px;width:1px;height:693px;background:repeating-linear-gradient(#8e8e8e 0 3px,transparent 3px 4px)"></div>
<div class="abs" style="left:218px;top:197px;width:815px;height:1px;background:repeating-linear-gradient(90deg,#e4e4e4 0 3px,transparent 3px 4px)"></div>
<div class="abs" style="left:218px;top:198px;width:815px;height:1px;background:repeating-linear-gradient(90deg,#a4a4a4 0 3px,transparent 3px 4px)"></div>
</div>
<div class="abs" id="vscroll" style="left:1250px;top:84px;width:17px;height:711px;background:linear-gradient(90deg,#ece4d5,#f6f2ea 40%,#fcfbf7)">
<div class="sbtn" style="left:0;top:0;width:17px;height:17px"><svg width="15" height="15" viewBox="0 0 15 15" style="display:block"><path d="M4 9.500l3.500-4l3.500 4" fill="none" stroke="#806a5e" stroke-width="1.300"/></svg></div>
<div class="sbtn" style="left:0;top:18px;width:17px;height:219px"><div class="abs" style="left:4px;top:106px;width:7px;height:5px;background:linear-gradient(#8b7265 0 1px,transparent 1px 2px,#8b7265 2px 3px,transparent 3px 4px,#8b7265 4px 5px)"></div></div>
<div class="sbtn" style="left:0;top:694px;width:17px;height:17px"><svg width="15" height="15" viewBox="0 0 15 15" style="display:block"><path d="M4 5.500l3.500 4l3.500-4" fill="none" stroke="#806a5e" stroke-width="1.300"/></svg></div>
</div>
<div class="abs" id="hscroll" style="left:1px;top:795px;width:1266px;height:17px;background:linear-gradient(#f1eee8,#f8f6f2 40%,#fdfcfa)">
<div class="sbtn dis" style="left:0;top:0;width:17px;height:17px"><svg width="15" height="15" viewBox="0 0 15 15" style="display:block"><path d="M9 3.500l-4 4l4 4" fill="none" stroke="#b9aaa2" stroke-width="1.200"/></svg></div>
<div class="sbtn dis" style="left:1232px;top:0;width:17px;height:17px"><svg width="15" height="15" viewBox="0 0 15 15" style="display:block"><path d="M6 3.500l4 4l-4 4" fill="none" stroke="#b9aaa2" stroke-width="1.200"/></svg></div>
<div class="abs" style="left:1249px;top:0;width:17px;height:17px;background:#f5f3ee"></div>
</div>
<div class="abs" id="status" style="left:1px;top:812px;width:1266px;height:24px;border:1px solid #8b7265;border-radius:2px;background:linear-gradient(#f8f6f2 0%,#f1ede4 45%,#e9e3d4 100%)">
<div class="abs" style="left:6px;top:4px;font-size:12px;line-height:14px;letter-spacing:-.35px">Page 1 of 2</div>
<div class="abs" style="left:74px;top:3px;width:1px;height:16px;background:#8b7265"></div>
<div class="abs" style="left:1072px;top:3px;width:1px;height:16px;background:#8b7265"></div>
<div class="abs" style="left:1081px;top:4px;font-size:12px;line-height:14px;letter-spacing:-.6px">100%</div>
<div class="zbtn" style="left:1117px;top:4px"><svg width="11" height="11" viewBox="0 0 11 11" style="display:block"><path d="M3 5.500h5" stroke="#806a5e" stroke-width="1"/></svg></div>
<div class="abs" style="left:1132px;top:8px;width:110px;height:5px;border:1px solid #8b7265;border-radius:3px;background:#fff"></div>
<div class="abs" style="left:1133px;top:9px;width:54px;height:3px;border-radius:2px 0 0 2px;background:linear-gradient(#8ccbf9,#5eb0f2)"></div>
<svg class="abs" style="left:1182px;top:4px" width="9" height="16" viewBox="0 0 9 16"><path d="M.5 1.500q0-1 1-1h6q1 0 1 1v9.500l-4 4.300l-4-4.300z" fill="url(#gThumb)" stroke="#b98d4f" stroke-width="1"/></svg>
<div class="zbtn" style="left:1244px;top:4px"><svg width="11" height="11" viewBox="0 0 11 11" style="display:block"><path d="M3 5.500h5M5.500 3v5" stroke="#806a5e" stroke-width="1"/></svg></div>
</div>
<div id="winborder"></div>
</body>
</html>
